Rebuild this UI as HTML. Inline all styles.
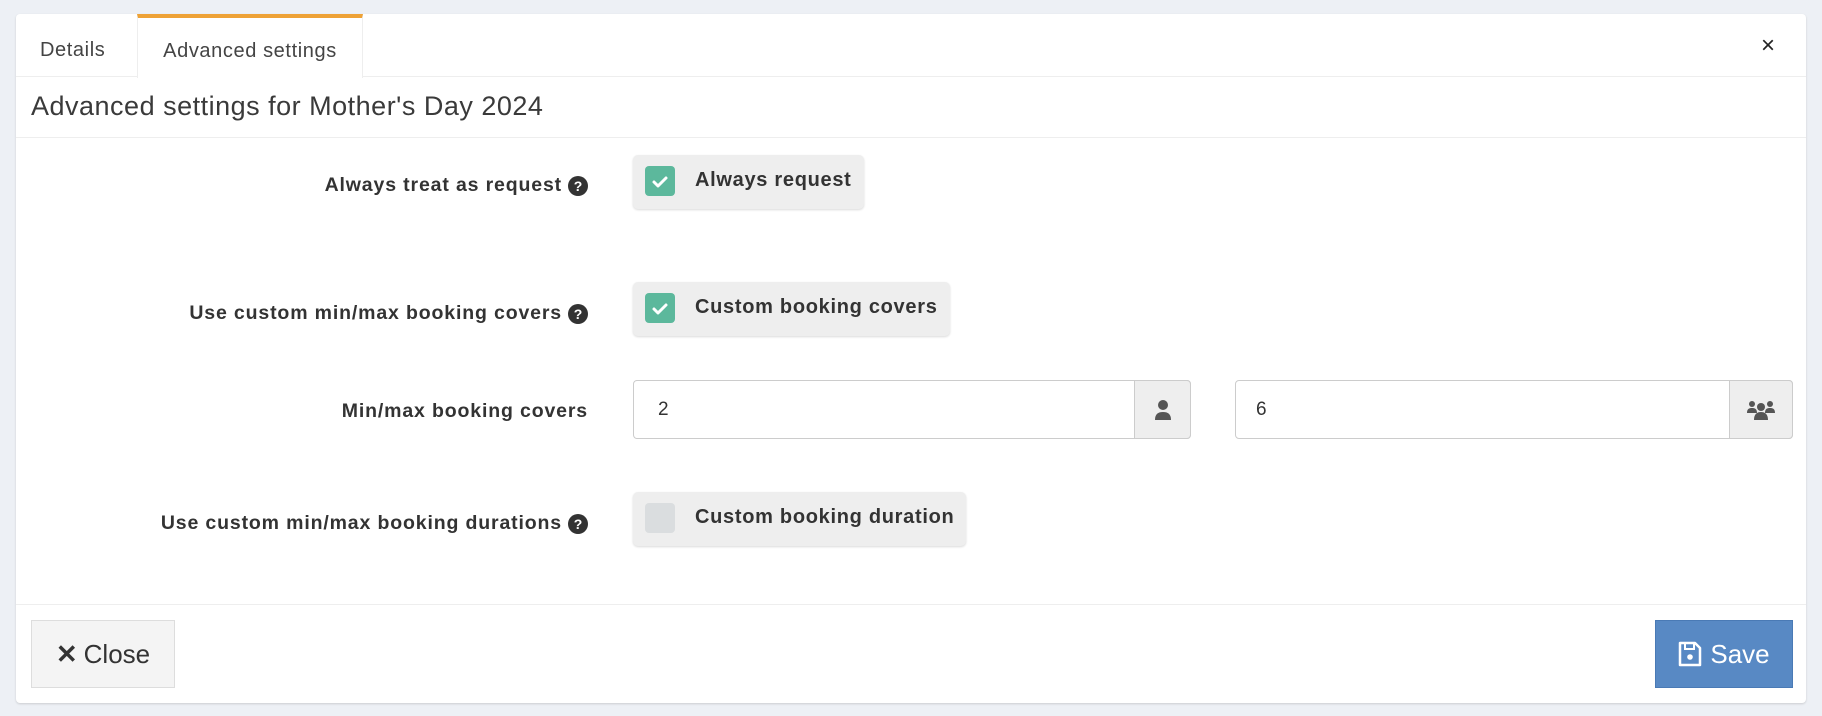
<!DOCTYPE html>
<html><head><style>
*{box-sizing:border-box;margin:0;padding:0}
body{width:1822px;height:716px;background:#edf0f5;font-family:"Liberation Sans",sans-serif;color:#333;position:relative;overflow:hidden}
.card{position:absolute;left:16px;top:14px;width:1790px;height:689px;background:#fff;border-radius:4px;box-shadow:0 1px 2px rgba(0,0,0,.15)}
.abs{position:absolute}
.tabs{left:0;top:0;width:100%;height:63px;border-bottom:1px solid #eee}
.tab{position:absolute;top:0;height:64px;font-size:20px;letter-spacing:0.6px;line-height:72px;color:#444}
.tab.active{left:121px;width:226px;border-top:4px solid #eea236;border-left:1px solid #eee;border-right:1px solid #eee;background:#fff;text-align:center;line-height:66px}
.title{left:15px;top:77px;font-size:27px;letter-spacing:0.5px;color:#3a3a3a}
.hr{left:0;width:100%;height:1px;background:#eee}
.lbl{position:absolute;right:1218px;font-size:19.5px;letter-spacing:0.85px;font-weight:bold;color:#333;white-space:nowrap;display:flex;align-items:center}
.q{display:inline-block;width:20px;height:20px;border-radius:50%;background:#333;color:#fff;font-size:14px;line-height:20px;text-align:center;margin-left:6px;font-weight:bold;letter-spacing:0}
.pill{position:absolute;left:617px;height:54px;background:#eee;border-radius:5px;box-shadow:0 1px 2px rgba(0,0,0,.15);font-weight:bold;font-size:20px;letter-spacing:0.7px;line-height:50px;padding-left:62px;padding-right:12px;color:#333}
.cb{position:absolute;left:12px;top:11px;width:30px;height:30px;border-radius:4px;background:#5cb89c}
.cb.off{background:#dadddf}
.inp{position:absolute;top:366px;height:59px;border:1px solid #ccc;border-radius:4px;background:#fff;font-size:19px;line-height:57px;padding-left:24px}
.add{position:absolute;right:-1px;height:59px;top:-1px;background:#eee;border:1px solid #ccc;border-radius:0 4px 4px 0;display:flex;align-items:center;justify-content:center}
.btn{position:absolute;top:606px;height:68px;font-size:26px;display:flex;align-items:center;justify-content:center}
</style></head><body>
<div class="card">
 <div class="abs tabs"></div>
 <div class="tab" style="left:24px">Details</div>
 <div class="tab active">Advanced settings</div>
 <div class="abs" style="left:1745px;top:18px;font-size:24px;color:#222">×</div>
 <div class="abs title">Advanced settings for Mother's Day 2024</div>
 <div class="abs hr" style="top:123px"></div>

 <div class="lbl" style="top:160px">Always treat as request<span class="q">?</span></div>
 <div class="pill" style="top:141px"><span class="cb"><svg width="30" height="30" viewBox="0 0 30 30"><path d="M9 15l4 4 8-8" stroke="#fff" stroke-width="3" fill="none" stroke-linecap="round" stroke-linejoin="round"/></svg></span>Always request</div>

 <div class="lbl" style="top:288px">Use custom min/max booking covers<span class="q">?</span></div>
 <div class="pill" style="top:268px"><span class="cb"><svg width="30" height="30" viewBox="0 0 30 30"><path d="M9 15l4 4 8-8" stroke="#fff" stroke-width="3" fill="none" stroke-linecap="round" stroke-linejoin="round"/></svg></span>Custom booking covers</div>

 <div class="lbl" style="top:386px">Min/max booking covers</div>
 <div class="inp" style="left:617px;width:558px">2<div class="add" style="width:57px"><svg width="20" height="22" viewBox="0 0 20 22"><circle cx="10" cy="6" r="5" fill="#555"/><path d="M2 21c0-6 3-8 8-8s8 2 8 8z" fill="#555"/></svg></div></div>
 <div class="inp" style="left:1219px;width:558px;padding-left:20px">6<div class="add" style="width:64px"><svg width="28" height="22" viewBox="0 0 28 22"><circle cx="5" cy="5" r="3" fill="#555"/><circle cx="23" cy="5" r="3" fill="#555"/><circle cx="14" cy="8" r="4" fill="#555"/><path d="M0 14c0-4 2-5 5-5s5 1 5 5z M18 14c0-4 2-5 5-5s5 1 5 5z M7 21c0-6 3-8 7-8s7 2 7 8z" fill="#555"/></svg></div></div>

 <div class="lbl" style="top:498px">Use custom min/max booking durations<span class="q">?</span></div>
 <div class="pill" style="top:478px"><span class="cb off"></span>Custom booking duration</div>

 <div class="abs hr" style="top:590px"></div>
 <div class="btn" style="left:15px;width:144px;background:#f4f4f4;border:1px solid #ddd;color:#333"><span style="font-weight:bold;margin-right:6px">✕</span>Close</div>
 <div class="btn" style="left:1639px;width:138px;background:#5889c4;border:1px solid #4a7ab5;color:#fff"><svg width="24" height="26" viewBox="0 0 24 26" style="margin-right:8px"><path d="M2 2h15l5 5v17H2z" fill="none" stroke="#fff" stroke-width="2.5" stroke-linejoin="round"/><rect x="7" y="2" width="9" height="6" fill="none" stroke="#fff" stroke-width="2"/><circle cx="12" cy="16" r="2.8" fill="#fff"/></svg>Save</div>
</div>
</body></html>
